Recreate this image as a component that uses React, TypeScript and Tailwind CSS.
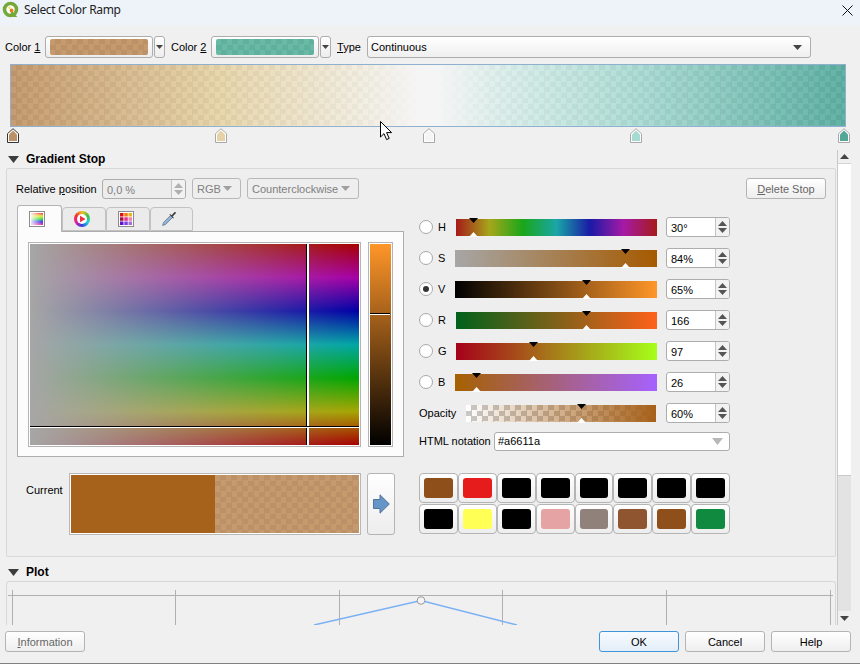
import React from "react";

const sliders = [
  { l: "H", v: "30°", w: "w-[201px]", ml: "ml-[4px]", x: 17, g: "bg-[linear-gradient(to_right,#a61a1a,#a6a61a,#1aa61a,#1aa6a6,#1a1aa6,#a61aa6,#a61a1a)]" },
  { l: "S", v: "84%", w: "w-[202px]", ml: "ml-[3px]", x: 170, g: "bg-[linear-gradient(to_right,#a6a6a6,#a65a00)]" },
  { l: "V", v: "65%", w: "w-[202px]", ml: "ml-[3px]", x: 131, g: "bg-[linear-gradient(to_right,#000000,#ff9629)]", on: true },
  { l: "R", v: "166", w: "w-[201px]", ml: "ml-[4px]", x: 130, g: "bg-[linear-gradient(to_right,#00611a,#ff611a)]" },
  { l: "G", v: "97", w: "w-[201px]", ml: "ml-[4px]", x: 77, g: "bg-[linear-gradient(to_right,#a6001a,#a6ff1a)]" },
  { l: "B", v: "26", w: "w-[202px]", ml: "ml-[3px]", x: 21, g: "bg-[linear-gradient(to_right,#a66100,#a661ff)]" },
];

const swatches = [
  "#8f4f1a", "#e61c1c", "#000000", "#000000", "#000000", "#000000", "#000000", "#000000",
  "#000000", "#ffff55", "#000000", "#e6a3a3", "#90827a", "#8f5430", "#8f4f1a", "#0f8a3e",
];

function Arrow({ dir = "down", c = "#444444" }: { dir?: "down" | "up"; c?: string }) {
  return (
    <svg width="9" height="5" viewBox="0 0 9 5" className="block">
      <path d={dir === "down" ? "M0 0H9L4.5 5Z" : "M4.5 0L9 5H0Z"} fill={c} />
    </svg>
  );
}

function Spin({ v, w = "w-[64px]", off = false }: { v: string; w?: string; off?: boolean }) {
  return (
    <div className={`${w} h-[20px] flex border border-[#adadad] rounded-[3px] overflow-hidden ${off ? "bg-[#ececec] text-[#808080]" : "bg-white text-black"}`}>
      <div className="flex-1 pl-[4px] leading-[20px] whitespace-nowrap">{v}</div>
      <div className="w-[14px] border-l border-[#c4c4c4] bg-[#f2f2f2] flex flex-col items-center justify-center gap-[2px]">
        <Arrow dir="up" c={off ? "#b0b0b0" : "#555555"} />
        <Arrow c={off ? "#b0b0b0" : "#555555"} />
      </div>
    </div>
  );
}

function Slider({ g, w, x, ml }: { g: string; w: string; x: number; ml: string }) {
  return (
    <div className={`relative h-[17px] ${w} ${ml} ${g}`}>
      <svg width="9" height="5" viewBox="0 0 9 5" className="absolute top-[-1px]" style={{ left: x - 4 }}>
        <path d="M0 0H9L4.5 5Z" fill="#000000" />
      </svg>
      <svg width="9" height="5" viewBox="0 0 9 5" className="absolute bottom-[-1px]" style={{ left: x - 4 }}>
        <path d="M4.5 0L9 5H0Z" fill="#ffffff" />
      </svg>
    </div>
  );
}

function Stop({ c, dark }: { c: string; dark?: boolean }) {
  return (
    <svg width="12" height="15" viewBox="0 0 12 15" className="block">
      <path d="M6 .7L11.5 5.7V14.5H.5V5.7Z" fill="#ffffff" stroke={dark ? "#333333" : "#a8a8a8"} />
      <path d="M6 2.6L10 6.4V13H2V6.4Z" fill={c} />
    </svg>
  );
}

function Heading({ t }: { t: string }) {
  return (
    <div className="h-[18px] flex items-center pl-[8px]">
      <svg width="11" height="7" viewBox="0 0 11 7" className="block">
        <path d="M0 0H11L5.5 7Z" fill="#3c3c3c" />
      </svg>
      <span className="ml-[7px] font-bold text-black text-[12px]">{t}</span>
    </div>
  );
}

function Combo({ t, w, off }: { t: string; w: string; off?: boolean }) {
  return (
    <div className={`${w} h-[21px] flex items-center justify-between pl-[4px] pr-[8px] border border-[#b8b8b8] rounded-[3px] whitespace-nowrap ${off ? "bg-[#eeeeee] text-[#808080]" : ""}`}>
      <span className="mt-[1px]">{t}</span>
      <Arrow c="#a0a0a0" />
    </div>
  );
}

function ColorBtn({ w, g }: { w: string; g: string }) {
  return (
    <div className={`${w} h-[22px] px-[4px] py-[2px] border border-[#adadad] rounded-[3px] bg-gradient-to-b from-white to-[#ededed]`}>
      <div className={`h-full rounded-[2px] ${g}`} />
    </div>
  );
}

function MiniDrop() {
  return (
    <div className="w-[11px] h-[22px] ml-[1px] flex items-center justify-center border border-[#adadad] rounded-[3px] bg-gradient-to-b from-white to-[#ededed]">
      <svg width="7" height="4" viewBox="0 0 7 4" className="block"><path d="M0 0H7L3.5 4Z" fill="#444444" /></svg>
    </div>
  );
}

function Btn({ t, u, cls = "border-[#b4b4b4] from-white to-[#eeeeee]" }: { t: string; u?: string; cls?: string }) {
  return (
    <div className={`w-[80px] h-[21px] pt-[1px] flex items-center justify-center whitespace-nowrap border rounded-[3px] bg-gradient-to-b ${cls}`}>
      {u ? <span className="underline">{u}</span> : null}
      {t}
    </div>
  );
}

const checkA = "bg-[repeating-conic-gradient(#bc9167_0_25%,#c59b6e_0_50%)] bg-[length:11px_11px]";

export default function App() {
  return (
    <div className="w-[860px] h-[664px] bg-[#f0f0f0] flex flex-col overflow-hidden relative text-[11px] text-black font-['Liberation_Sans','Arial',sans-serif]">
      <div className="h-[25px] shrink-0 bg-[#eef3fa] flex items-center pb-[5px] pl-[2px] pr-[8px] text-[12px] font-['Noto_Sans',sans-serif] tracking-[-0.35px]">
        <svg width="18" height="18" viewBox="0 0 18 18" className="block">
          <circle cx="8.5" cy="8.5" r="6" fill="#ffffff" stroke="#74a83a" strokeWidth="3.6" />
          <path d="M10.2 10.4L15.4 16H11.6L8.2 12Z" fill="#74a83a" />
          <circle cx="9.6" cy="9.4" r="1.9" fill="#ee7913" />
          <path d="M6 6.6l2-1.2 1 1.6-2 1.2z" fill="#f0e64a" />
        </svg>
        <span className="ml-[4px] text-[#222222] whitespace-nowrap">Select Color Ramp</span>
        <svg width="11" height="11" viewBox="0 0 11 11" className="block ml-auto mr-[-1px]">
          <path d="M.5 .5L10.5 10.5M10.5 .5L.5 10.5" stroke="#111111" strokeWidth="1" />
        </svg>
      </div>

      <div className="mt-[11px] h-[22px] shrink-0 flex items-center pl-[5px]">
        <span className="w-[40px] mt-[1px] whitespace-nowrap">Color <span className="underline">1</span></span>
        <ColorBtn w="w-[108px]" g={checkA} />
        <MiniDrop />
        <span className="ml-[6px] mt-[1px] w-[40px] whitespace-nowrap">Color <span className="underline">2</span></span>
        <ColorBtn w="w-[108px]" g="bg-[repeating-conic-gradient(#5fb09d_0_25%,#6ab8a6_0_50%)] bg-[length:11px_11px]" />
        <MiniDrop />
        <span className="ml-[6px] mt-[1px] w-[30px]"><span className="underline">T</span>ype</span>
        <div className="w-[444px] h-[22px] flex items-center justify-between pl-[3px] pr-[8px] border border-[#adadad] rounded-[3px] bg-gradient-to-b from-white to-[#efefef]">
          <span className="mt-[1px]">Continuous</span>
          <Arrow c="#444444" />
        </div>
      </div>

      <div className="mt-[6px] ml-[10px] w-[836px] h-[63px] shrink-0 border border-[#8fb0cf] bg-[linear-gradient(to_right,#a6611a99,#dfc27d99_25%,#f0ead8b3_42%,#f5f5f5ff_49%,#f5f5f5ff_51%,#d5ede8b3_58%,#80cdc199_75%,#01857199),repeating-conic-gradient(#dedede_0_25%,#f6f6f6_0_50%)] bg-[length:100%_100%,11px_11px]" />

      <div className="mt-[1px] ml-[7px] w-[843px] h-[16px] shrink-0 flex justify-between">
        <Stop c="#bc9167" dark />
        <Stop c="#e6d2a4" />
        <Stop c="#f5f5f5" />
        <Stop c="#a6dbd2" />
        <Stop c="#53a796" />
      </div>

      <div className="mt-[6px] h-[475px] shrink-0 flex overflow-hidden">
        <div className="w-[837px] shrink-0 overflow-hidden">
          <Heading t="Gradient Stop" />
          <div className="ml-[6px] w-[830px] h-[389px] pt-[9px] pl-[10px] border border-[#d8d8d8] rounded-[2px] bg-[#eeeeee]">
            <div className="h-[21px] flex items-center w-[809px]">
              <span className="w-[85px] ml-[-1px] mt-[1px] whitespace-nowrap">Relative <span className="underline">p</span>osition</span>
              <div className="ml-[1px]"><Spin v="0,0 %" w="w-[84px]" off /></div>
              <div className="ml-[6px]"><Combo t="RGB" w="w-[49px]" off /></div>
              <div className="ml-[6px]"><Combo t="Counterclockwise" w="w-[112px]" off /></div>
              <div className="ml-auto text-[#666666]"><Btn t="elete Stop" u="D" /></div>
            </div>

            <div className="mt-[6px] flex">
              <div className="w-[387px] shrink-0">
                <div className="h-[26px] flex items-end">
                  <div className="w-[45px] h-[27px] mb-[-1px] pr-[5px] pb-[1px] z-10 flex items-center justify-center bg-[#fcfcfc] border border-b-0 border-[#b4b4b4] rounded-t-[3px]">
                    <svg width="16" height="16" viewBox="0 0 16 16" className="block">
                      <defs>
                        <linearGradient id="rb" x1="0" y1="0" x2="0" y2="1">
                          <stop offset="0" stopColor="#f03030" />
                          <stop offset=".25" stopColor="#e8e830" />
                          <stop offset=".5" stopColor="#30e030" />
                          <stop offset=".72" stopColor="#3030f0" />
                          <stop offset="1" stopColor="#f030a0" />
                        </linearGradient>
                        <linearGradient id="rw" x1="0" y1="0" x2="1" y2="0">
                          <stop offset="0" stopColor="#ffffff" stopOpacity=".85" />
                          <stop offset="1" stopColor="#ffffff" stopOpacity="0" />
                        </linearGradient>
                      </defs>
                      <rect x=".5" y=".5" width="15" height="15" fill="#ffffff" stroke="#8c8c8c" />
                      <rect x="2" y="2" width="12" height="12" fill="url(#rb)" />
                      <rect x="2" y="2" width="12" height="12" fill="url(#rw)" />
                    </svg>
                  </div>
                  {[0, 1, 2].map((i) => (
                    <div key={i} className={`h-[24px] pr-[5px] flex items-center justify-center border border-[#c2c2c2] rounded-t-[4px] bg-[#ebebeb] ${i === 2 ? "w-[43px]" : "w-[44px]"}`}>
                      {i === 0 && (
                        <div className="relative w-[16px] h-[16px] rounded-full bg-[conic-gradient(#f0c020,#40c040,#20d0e0,#3040e0,#e020a0,#f03030,#f0c020)] flex items-center justify-center">
                          <svg width="10" height="10" viewBox="0 0 10 10" className="block">
                            <circle cx="5" cy="5" r="5" fill="#ffffff" />
                            <path d="M3 1.8L8.6 5 3 8.2Z" fill="#f03040" />
                          </svg>
                        </div>
                      )}
                      {i === 1 && (
                        <svg width="16" height="16" viewBox="0 0 16 16" className="block">
                          <rect x=".5" y=".5" width="15" height="15" fill="#ffffff" stroke="#8c8c8c" />
                          <rect x="2" y="2" width="3.5" height="3.5" fill="#e01010" />
                          <rect x="6.3" y="2" width="3.5" height="3.5" fill="#f08010" />
                          <rect x="10.5" y="2" width="3.5" height="3.5" fill="#f0b020" />
                          <rect x="2" y="6.3" width="3.5" height="3.5" fill="#a01040" />
                          <rect x="6.3" y="6.3" width="3.5" height="3.5" fill="#e03090" />
                          <rect x="10.5" y="6.3" width="3.5" height="3.5" fill="#f080b0" />
                          <rect x="2" y="10.5" width="3.5" height="3.5" fill="#6010d0" />
                          <rect x="6.3" y="10.5" width="3.5" height="3.5" fill="#8040e0" />
                          <rect x="10.5" y="10.5" width="3.5" height="3.5" fill="#a070e0" />
                        </svg>
                      )}
                      {i === 2 && (
                        <svg width="16" height="16" viewBox="0 0 16 16" className="block">
                          <path d="M9.5 4.5L2.6 11.4 1.6 14.4 4.6 13.4 11.5 6.5Z" fill="#8fb6d8" stroke="#667788" strokeWidth=".8" />
                          <path d="M8.4 3.6L12.4 7.6 13 7 11.6 5.4 14.6 2.6C15.4 1.4 14.4.6 13.4 1.2L10.6 4.2 9 3Z" fill="#3a3a3a" />
                        </svg>
                      )}
                    </div>
                  ))}
                </div>
                <div className="w-[387px] h-[226px] pt-[10px] pl-[10px] flex border border-[#adadad] bg-[#fcfcfc]">
                  <div className="w-[333px] h-[205px] border border-[#b4b4b4]">
                    <div className="relative w-full h-full border border-white bg-[linear-gradient(to_right,#a6a6a6,#a6a6a600),linear-gradient(to_bottom,#a60000,#a600a6,#0000a6,#00a6a6,#00a600,#a6a600,#a60000)]">
                      <div className="absolute top-0 bottom-0 left-[276px] w-[3px] border-l border-black bg-white" />
                      <div className="absolute left-0 right-0 top-[182px] h-[2px] border-t border-black bg-white" />
                    </div>
                  </div>
                  <div className="ml-[7px] w-[25px] h-[205px] border border-[#b4b4b4]">
                    <div className="relative w-full h-full border border-white bg-[linear-gradient(to_bottom,#ff9629,#000000)]">
                      <div className="absolute left-0 right-[1px] top-[69px] h-[2px] bg-white border-t border-black" />
                    </div>
                  </div>
                </div>
              </div>

              <div className="ml-[15px] mt-[12px] w-[311px]">
                {sliders.map((s) => (
                  <div key={s.l} className="h-[20px] mb-[11px] flex items-center">
                    <div className="w-[14px] h-[14px] rounded-full border border-[#a8a8a8] bg-white flex items-center justify-center">
                      {s.on ? <div className="w-[6px] h-[6px] rounded-full bg-[#333333]" /> : null}
                    </div>
                    <span className="ml-[5px] mt-[1px] w-[14px]">{s.l}</span>
                    <Slider g={s.g} w={s.w} x={s.x} ml={s.ml} />
                    <div className="ml-[9px]"><Spin v={s.v} /></div>
                  </div>
                ))}
                <div className="h-[20px] mb-[9px] flex items-center">
                  <span className="w-[47px]">Opacity</span>
                  <div className="relative w-[190px] h-[17px] bg-[linear-gradient(to_right,#a6611a00,#a6611a),repeating-conic-gradient(#c8c8c8_0_25%,#ffffff_0_50%)] bg-[length:100%_100%,11px_11px]">
                    <Slider g="" w="w-[190px]" x={115} ml="" />
                  </div>
                  <div className="ml-[10px]"><Spin v="60%" /></div>
                </div>
                <div className="h-[19px] flex items-center">
                  <span className="w-[75px] whitespace-nowrap">HTML notation</span>
                  <div className="w-[236px] h-[19px] flex items-center justify-between pl-[3px] pr-[6px] border border-[#adadad] rounded-[3px] bg-white">
                    <span>#a6611a</span>
                    <svg width="11" height="7" viewBox="0 0 11 7" className="block"><path d="M0 0H11L5.5 7Z" fill="#b8b8b8" /></svg>
                  </div>
                </div>
              </div>
            </div>

            <div className="mt-[16px] flex">
              <div className="w-[52px] pl-[9px] pt-[9px]">Current</div>
              <div className="w-[292px] h-[62px] flex border border-[#b8b8b8]">
                <div className="w-full h-full flex border border-white">
                  <div className="w-[144px] bg-[#a6611a]" />
                  <div className={`flex-1 ${checkA}`} />
                </div>
              </div>
              <div className="ml-[6px] w-[28px] h-[62px] flex items-center justify-center border border-[#b4b4b4] rounded-[3px] bg-gradient-to-b from-white to-[#ededed]">
                <svg width="17" height="20" viewBox="0 0 17 20" className="block">
                  <path d="M.5 5.5H7V.8L16.3 10 7 19.2V14.5H.5Z" fill="#6596c8" stroke="#54739a" />
                </svg>
              </div>
              <div className="ml-[24px] w-[311px] grid grid-cols-8 gap-y-[1px] h-[61px]">
                {swatches.map((c, i) => (
                  <div key={i} className="h-[30px] p-[4px] border border-[#b4b4b4] rounded-[4px] bg-gradient-to-b from-white to-[#ededed]">
                    <div className="w-full h-full rounded-[3px]" style={{ backgroundColor: c }} />
                  </div>
                ))}
              </div>
            </div>
          </div>

          <div className="mt-[6px]"><Heading t="Plot" /></div>
          <div className="ml-[6px] w-[830px] h-[44px] border-t border-x border-[#d8d8d8] rounded-t-[3px]">
            <svg width="828" height="43" viewBox="0 0 828 43" className="block">
              <path d="M1 13.5H826" stroke="#b0b0b0" />
              {[5, 168, 332, 495, 659, 823].map((x) => (
                <path key={x} d={`M${x + 0.5} 8V43`} stroke="#b0b0b0" />
              ))}
              <path d="M307 43L414 18.5 510 43" fill="none" stroke="#7ab0f5" strokeWidth="1.5" />
              <circle cx="414" cy="18.5" r="3.8" fill="#f4f4f4" stroke="#999999" />
            </svg>
          </div>
        </div>

        <div className="w-[14px] shrink-0 flex flex-col border-l border-[#c8c8c8] bg-[#e3e3e3]">
          <div className="h-[14px] flex items-center justify-center bg-[#f0f0f0] border-b border-[#d4d4d4]"><Arrow dir="up" /></div>
          <div className="h-[312px] bg-white border-b border-[#c8c8c8]" />
          <div className="flex-1" />
          <div className="h-[14px] flex items-center justify-center bg-[#f0f0f0]"><Arrow /></div>
        </div>
      </div>

      <div className="h-[38px] shrink-0 flex items-start pt-[6px] pl-[5px] pr-[9px]">
        <div className="text-[#666666]"><Btn t="nformation" u="I" /></div>
        <div className="ml-auto"><Btn t="OK" cls="border-[#3f95d8] from-[#f6fbff] to-[#e4eef8]" /></div>
        <div className="ml-[6px]"><Btn t="Cancel" /></div>
        <div className="ml-[6px]"><Btn t="Help" /></div>
      </div>
      <div className="h-[1px] shrink-0 bg-[#808080]" />

      <svg width="13" height="20" viewBox="0 0 13 20" className="absolute left-[380px] top-[121px]">
        <path d="M.5 .5V16L4 12.6 6.6 18.6 9.2 17.4 6.6 11.6H11.6Z" fill="#ffffff" stroke="#000000" />
      </svg>
    </div>
  );
}
